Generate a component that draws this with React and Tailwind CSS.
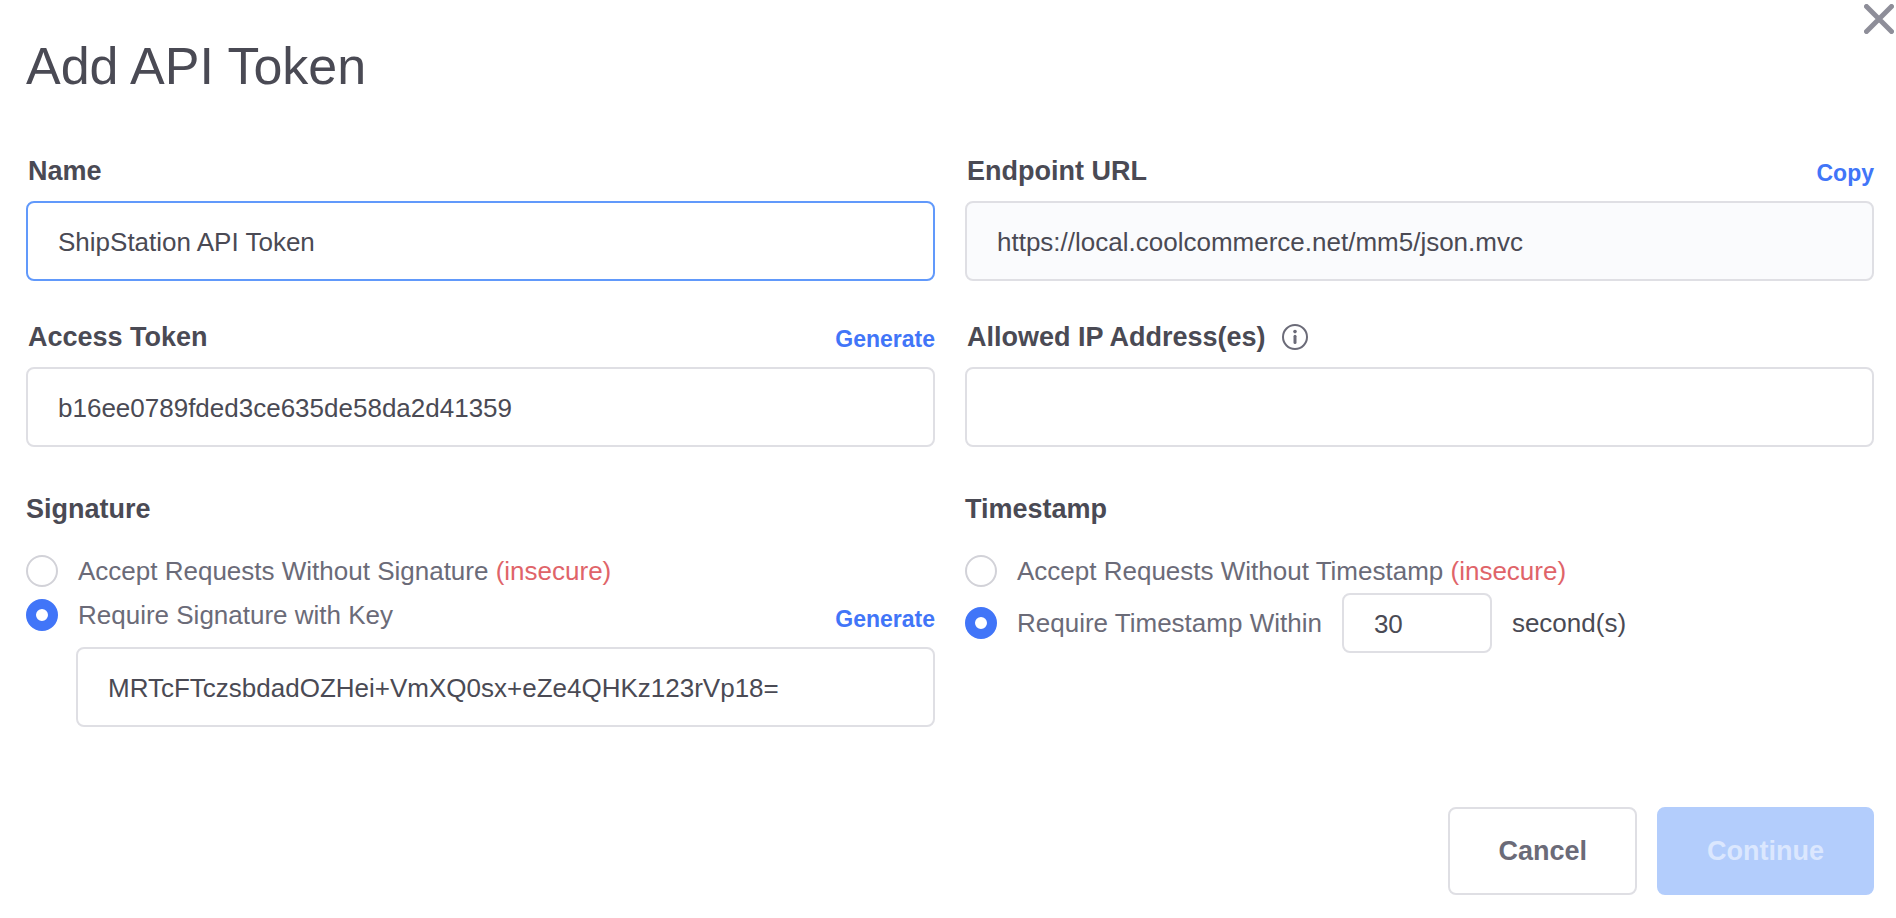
import React, { useState } from 'react';

const inputBase =
  'block w-full rounded-lg border-2 px-[30px] pt-0.5 text-[26px] leading-8 text-[#4a4a54] outline-none';

const buttonBase = 'h-22 rounded-lg border-2 px-12 text-[27px] font-bold';

const LinkButton = ({ children, onClick }) => (
  <button
    type="button"
    onClick={onClick}
    className="cursor-pointer text-[23px] leading-8 font-bold text-[#4175f8]"
  >
    {children}
  </button>
);

const InfoIcon = () => (
  <svg className="h-[26px] w-[26px] text-[#6b6b78]" viewBox="0 0 26 26" fill="none" aria-hidden="true">
    <circle cx="13" cy="13" r="12" stroke="currentColor" strokeWidth="2" />
    <circle cx="13" cy="7.6" r="1.8" fill="currentColor" />
    <path d="M13 12.2v6.4" stroke="currentColor" strokeWidth="3" strokeLinecap="round" />
  </svg>
);

const CloseIcon = () => (
  <svg className="h-[30px] w-[30px]" viewBox="0 0 30 30" fill="none" aria-hidden="true">
    <path d="M2.5 2.5l25 25M27.5 2.5l-25 25" stroke="currentColor" strokeWidth="5" strokeLinecap="round" />
  </svg>
);

const Field = ({ id, label, action, info, className, ...inputProps }) => (
  <div>
    <div className="mb-3 flex h-9 items-end justify-between">
      <div className="flex items-center gap-4 pl-0.5">
        <label htmlFor={id} className="text-[27px] leading-9 font-bold text-[#4a4a54]">
          {label}
        </label>
        {info && <InfoIcon />}
      </div>
      {action}
    </div>
    <input id={id} type="text" className={`${inputBase} h-20 ${className}`} {...inputProps} />
  </div>
);

const Radio = ({ id, name, checked, onChange, children }) => (
  <div className="flex items-center gap-5">
    <input
      id={id}
      name={name}
      type="radio"
      checked={checked}
      onChange={onChange}
      className="h-8 w-8 shrink-0 appearance-none rounded-full border-2 border-[#d2d2d8] bg-white checked:border-10 checked:border-[#4175f8]"
    />
    <label htmlFor={id} className="text-[26px] leading-8 text-[#6b6b78]">
      {children}
    </label>
  </div>
);

const Insecure = () => <span className="text-[#e06469]">(insecure)</span>;

const App = () => {
  const [name, setName] = useState('ShipStation API Token');
  const [token, setToken] = useState('b16ee0789fded3ce635de58da2d41359');
  const [ips, setIps] = useState('');
  const [signature, setSignature] = useState('key');
  const [key, setKey] = useState('MRTcFTczsbdadOZHei+VmXQ0sx+eZe4QHKz123rVp18=');
  const [timestamp, setTimestamp] = useState('within');
  const [seconds, setSeconds] = useState('30');
  const endpoint = 'https://local.coolcommerce.net/mm5/json.mvc';

  // Random hex string for the token and the key
  const generate = () =>
    Array.from(crypto.getRandomValues(new Uint8Array(16)), (b) => b.toString(16).padStart(2, '0')).join('');

  return (
    <form
      className="relative bg-white pt-[34px] pr-[22px] pb-[22px] pl-[26px] font-['Liberation_Sans',Arial,sans-serif]"
      onSubmit={(e) => e.preventDefault()}
    >
      <button type="button" aria-label="Close" className="absolute top-1 right-[2px] cursor-pointer text-[#8e8e99]">
        <CloseIcon />
      </button>

      <h1 className="text-[52px] leading-16 text-[#4a4a54]">Add API Token</h1>

      <div className="mt-[55px] grid grid-cols-2 gap-x-[30px] gap-y-[38px]">
        <Field
          id="name"
          label="Name"
          value={name}
          onChange={(e) => setName(e.target.value)}
          className="border-[#6199fb]"
        />
        <Field
          id="endpoint"
          label="Endpoint URL"
          value={endpoint}
          readOnly
          action={<LinkButton onClick={() => navigator.clipboard.writeText(endpoint)}>Copy</LinkButton>}
          className="border-[#dfdfe4] bg-[#fafbfd]"
        />
        <Field
          id="token"
          label="Access Token"
          value={token}
          onChange={(e) => setToken(e.target.value)}
          action={<LinkButton onClick={() => setToken(generate())}>Generate</LinkButton>}
          className="border-[#dfdfe4]"
        />
        <Field
          id="ips"
          label="Allowed IP Address(es)"
          info
          value={ips}
          onChange={(e) => setIps(e.target.value)}
          className="border-[#dfdfe4]"
        />
      </div>

      <div className="mt-11 grid grid-cols-2 gap-x-[30px]">
        <fieldset>
          <legend className="text-[27px] leading-9 font-bold text-[#4a4a54]">Signature</legend>
          <div className="mt-7">
            <Radio id="sig-none" name="signature" checked={signature === 'none'} onChange={() => setSignature('none')}>
              Accept Requests Without Signature <Insecure />
            </Radio>
          </div>
          <div className="mt-3 flex h-9 justify-between">
            <div>
              <Radio id="sig-key" name="signature" checked={signature === 'key'} onChange={() => setSignature('key')}>
                Require Signature with Key
              </Radio>
            </div>
            <div className="self-end">
              <LinkButton onClick={() => setKey(generate())}>Generate</LinkButton>
            </div>
          </div>
          <div className="mt-3 pl-[50px]">
            <input
              type="text"
              aria-label="Signature key"
              value={key}
              onChange={(e) => setKey(e.target.value)}
              className={`${inputBase} h-20 border-[#dfdfe4]`}
            />
          </div>
        </fieldset>

        <fieldset>
          <legend className="text-[27px] leading-9 font-bold text-[#4a4a54]">Timestamp</legend>
          <div className="mt-7">
            <Radio id="ts-none" name="timestamp" checked={timestamp === 'none'} onChange={() => setTimestamp('none')}>
              Accept Requests Without Timestamp <Insecure />
            </Radio>
          </div>
          <div className="mt-1.5 flex items-center gap-5">
            <Radio id="ts-within" name="timestamp" checked={timestamp === 'within'} onChange={() => setTimestamp('within')}>
              Require Timestamp Within
            </Radio>
            <div className="w-[150px]">
              <input
                id="seconds"
                type="text"
                value={seconds}
                onChange={(e) => setSeconds(e.target.value)}
                className={`${inputBase} h-15 border-[#dfdfe4]`}
              />
            </div>
            <label htmlFor="seconds" className="text-[26px] leading-8 text-[#4a4a54]">
              second(s)
            </label>
          </div>
        </fieldset>
      </div>

      <div className="mt-20 flex justify-end gap-5">
        <button type="button" className={`${buttonBase} cursor-pointer border-[#dfdfe4] text-[#6b6b78]`}>
          Cancel
        </button>
        <button type="submit" disabled className={`${buttonBase} border-[#b3cdfc] bg-[#b3cdfc] text-[#dbe7fe]`}>
          Continue
        </button>
      </div>
    </form>
  );
};

export default App;
